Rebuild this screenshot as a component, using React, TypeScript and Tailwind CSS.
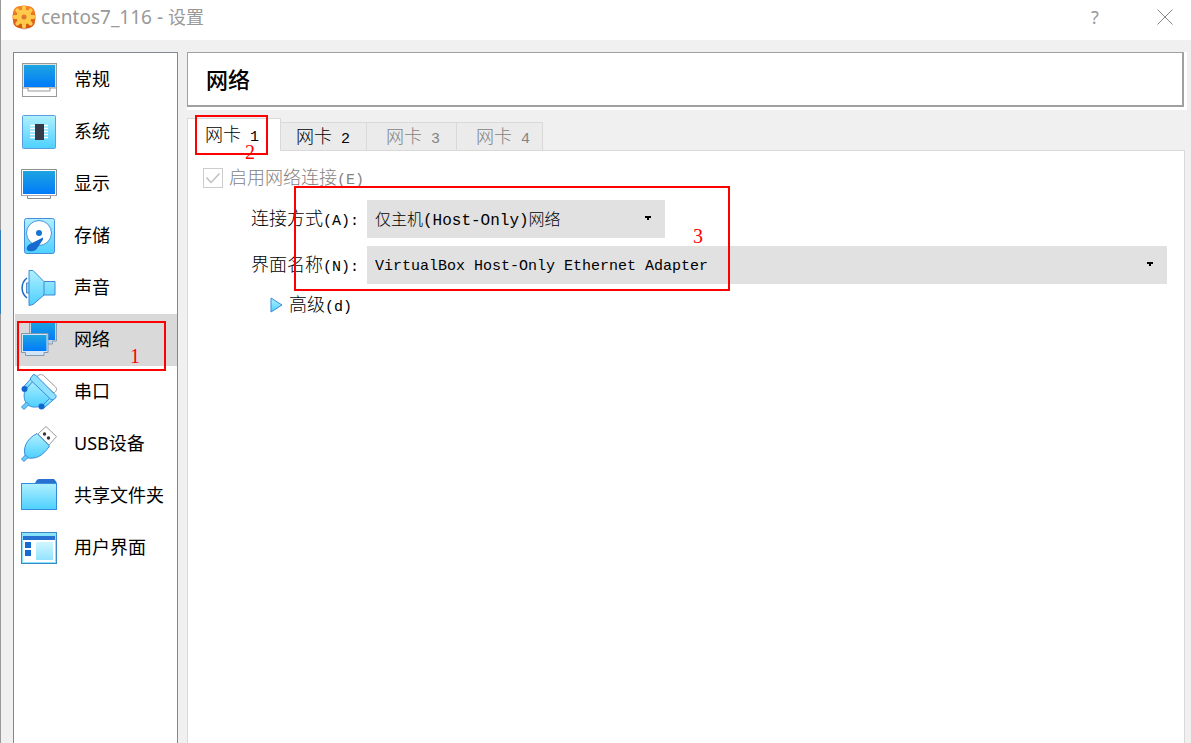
import type { ReactNode } from "react";

const sans = "font-['Noto_Sans','Noto_Sans_CJK_SC',sans-serif]";
const mono = "font-['Liberation_Mono','Noto_Sans_CJK_SC',monospace]";
const red = "text-[#ff0000] font-['Liberation_Serif','Noto_Sans_CJK_SC',serif]";

/* Sets Latin runs at half the width of the Chinese characters. */
function Mixed({ text }: { text: string }) {
  const runs = text.match(/[\x20-\x7e]+|[^\x20-\x7e]+/g) ?? [];
  return (
    <span className="inline-block pt-1 text-lg leading-5 whitespace-pre">
      {runs.map((run, i) => (
        <span key={i} className={/^[\x20-\x7e]/.test(run) ? "text-[15px] leading-5" : "font-light leading-5"}>
          {run}
        </span>
      ))}
    </span>
  );
}

function Icon({ children }: { children: ReactNode }) {
  return (
    <svg viewBox="0 0 36 36" className="size-9 shrink-0" aria-hidden="true">
      {children}
    </svg>
  );
}

function Gradients() {
  return (
    <svg className="absolute size-0" aria-hidden="true">
      <defs>
        <linearGradient id="screen" x1="0" y1="0" x2="0" y2="1">
          <stop offset="0" stopColor="#1ea4e0" />
          <stop offset="1" stopColor="#007bfa" />
        </linearGradient>
        <linearGradient id="sky" x1="0" y1="0" x2="0" y2="1">
          <stop offset="0" stopColor="#b0f0ff" />
          <stop offset="1" stopColor="#4dd0ff" />
        </linearGradient>
        <linearGradient id="gear" x1="0" y1="0" x2="0" y2="1">
          <stop offset="0" stopColor="#ffd36a" />
          <stop offset="1" stopColor="#ffc034" />
        </linearGradient>
        <linearGradient id="rim" x1="0" y1="0" x2="0" y2="1">
          <stop offset="0" stopColor="#f58a2c" />
          <stop offset="1" stopColor="#d4500e" />
        </linearGradient>
      </defs>
    </svg>
  );
}

const items: { label: string; icon: ReactNode }[] = [
  {
    label: "常规",
    icon: (
      <>
        <rect x="1.5" y="1.5" width="34" height="33" fill="#fff" stroke="#999" />
        <rect x="2" y="2" width="33" height="24" fill="#e2e2dc" />
        <rect x="3" y="3" width="31" height="22" fill="url(#screen)" />
        <path d="M2 26h33M7 26v3h22v-3" fill="none" stroke="#999" />
        <path d="M8 26h20v2H8z" fill="#fff" />
      </>
    ),
  },
  {
    label: "系统",
    icon: (
      <>
        <rect x="1.5" y="1.5" width="33" height="33" rx="1" fill="url(#sky)" stroke="#5b9fe0" />
        <path d="M9 11.5h18M9 14.5h18M9 17.5h18M9 20.5h18M9 23.5h18" stroke="#fff" strokeWidth="1.5" />
        <rect x="14" y="10" width="9" height="16" fill="#353b48" />
      </>
    ),
  },
  {
    label: "显示",
    icon: (
      <>
        <path d="M.5 3.5h35v26h-6v3h-23v-3h-6z" fill="#fff" stroke="#8d8d8d" />
        <rect x="2" y="5" width="32" height="23" fill="url(#screen)" />
        <path d="M1 29.5h34" stroke="#aaa" />
      </>
    ),
  },
  {
    label: "存储",
    icon: (
      <>
        <rect x="3.5" y=".5" width="30" height="35" rx="2" fill="url(#sky)" stroke="#448edb" />
        <circle cx="18" cy="15" r="12.5" fill="#fff" stroke="#4693e0" />
        <circle cx="18" cy="15" r="3" fill="#1674cf" />
        <path d="M22 19.5 8 26.5c-3 2.5-3 6 0 6.5 4 .5 6.500 0 8-2.5l6-9z" fill="#166bd0" />
      </>
    ),
  },
  {
    label: "声音",
    icon: (
      <>
        <path d="M9 13H5.5v10H9" fill="#7edcfa" stroke="#5585c9" />
        <path d="M8 .5h4L23 11.500h11V25H23L12 34.500l-4 1z" fill="url(#sky)" stroke="#3f88d4" strokeLinejoin="round" />
        <path d="M23 12v13" stroke="#3f88d4" />
        <path d="M6 8C-.5 13-.5 23 6 28" fill="none" stroke="#1668c7" strokeWidth="1.5" />
      </>
    ),
  },
  {
    label: "网络",
    icon: (
      <>
        <path d="M8.500 0h27v19h-4v3h-19v-3h-4z" fill="#c4d4e6" stroke="#8a9cb0" />
        <path d="M10 0h24v18H10z" fill="url(#screen)" />
        <path d="M.5 11.5h26.500v19h-4v3H4.500v-3h-4z" fill="#d4e6f5" stroke="#8298b0" />
        <path d="M2 13h23.500v16H2z" fill="url(#screen)" />
      </>
    ),
  },
  {
    label: "串口",
    icon: (
      <>
        <path d="M15 4.500c1-3.500 5-5 7.500-3L34.500 13c2 2 1 4-1.500 6z" fill="#fff" stroke="#999" />
        <path d="m2.500 13 7-8 4 4-8 8z" fill="url(#sky)" stroke="#368bdc" />
        <path d="m28 22 4 4-9 8-4-3z" fill="url(#sky)" stroke="#368bdc" />
        <path d="M3.500 17C3 22 2.500 26 6 30c4 4 9 3.500 15 2L30 23 13 6z" fill="url(#sky)" stroke="#368bdc" strokeLinejoin="round" />
        <path d="m9.500 4 3-3.500 2 .500L35 21.500v2l-3 2.500-2-.5L9.500 6z" fill="#8ee2ff" stroke="#368bdc" strokeLinejoin="round" />
        <path d="m.5 33 5-5 2.500 2.500-5 5z" fill="#69cdf5" stroke="#368bdc" />
        <circle cx="3.500" cy="15" r="3" fill="#1266d0" />
        <circle cx="20.500" cy="32.500" r="3" fill="#1266d0" />
      </>
    ),
  },
  {
    label: "USB设备",
    icon: (
      <>
        <path d="m17 8 8-7.500 10.500 10L28 19z" fill="#fff" stroke="#999" />
        <circle cx="23.500" cy="8" r="1.700" fill="#353535" />
        <circle cx="27.500" cy="12" r="1.700" fill="#353535" />
        <path d="M16 7.500 28.500 20C22 30 14 34 5 31.500 1 23 5 13 16 7.500z" fill="url(#sky)" stroke="#368bdc" />
        <path d="m.5 33 4-4 2.500 2.500-4 4z" fill="#69cdf5" stroke="#368bdc" />
      </>
    ),
  },
  {
    label: "共享文件夹",
    icon: (
      <>
        <path d="M13 6c2-1 2-5 5-5h15l2.500 3v6H13z" fill="#2871d1" />
        <rect x=".5" y="5.500" width="35" height="26" fill="url(#sky)" stroke="#358cda" />
      </>
    ),
  },
  {
    label: "用户界面",
    icon: (
      <>
        <rect x=".5" y="2.500" width="35" height="31" fill="#86e3fb" stroke="#3c89c4" />
        <rect x="2" y="10" width="32" height="22" fill="#fff" />
        <rect x="2" y="6" width="32" height="4" fill="#2871d1" />
        <path d="M4 12h6v6H4zM4 20h6v6H4z" fill="#166bd0" />
        <rect x="15" y="12" width="17" height="18" fill="url(#sky)" opacity=".6" />
      </>
    ),
  },
];

const tabs = [
  { label: "网卡 2", disabled: false, width: "w-[86px] pl-[15px]" },
  { label: "网卡 3", disabled: true, width: "w-[90px] pl-[19px]" },
  { label: "网卡 4", disabled: true, width: "w-[86px] pl-[19px]" },
];

function Combo({ id, value, className }: { id: string; value: string; className: string }) {
  return (
    <div className={`relative ${className}`}>
      <select id={id} className="h-[38px] w-full appearance-none bg-[#e1e1e1] pt-1 pr-8 pl-2 text-black outline-none">
        <option>{value}</option>
      </select>
      <svg viewBox="0 0 6 4" className="pointer-events-none absolute top-4 right-3.5 h-1 w-1.5" aria-hidden="true">
        <path d="M0 0h6v2H4v2H2V2H0z" />
      </svg>
    </div>
  );
}

export default function App() {
  return (
    <div className={`flex min-h-screen bg-[#f0f0f0] text-black ${sans}`}>
      <Gradients />
      <div className="flex w-px shrink-0 flex-col bg-[#999]">
        <div className="mt-[230px] h-[84px] bg-[#3279b5]" />
      </div>
      <div className="flex min-w-0 grow flex-col">
        <header className="flex h-10 items-center bg-white pb-1.5 pl-2.5 text-[#999]">
          <svg viewBox="0 0 26 26" className="size-[26px]" aria-hidden="true">
            <circle cx="13.500" cy="14.500" r="11" fill="#999" opacity=".45" />
            <rect x="2" y="2" width="22" height="22" rx="7" fill="url(#rim)" />
            <circle cx="13" cy="13" r="11.500" fill="url(#rim)" />
            <circle cx="13" cy="13" r="7.500" fill="url(#gear)" />
            <g stroke="url(#gear)">
              <path d="M13 3.500v19.001M3.500 13h19.001M6.300 6.300l13.400 13.401M19.700 6.300 6.300 19.700" stroke="#ffc94c" strokeWidth="4" strokeLinecap="round" />
            </g>
            <circle cx="13" cy="13" r="2.500" fill="#e8742a" />
            <circle cx="13" cy="13" r="1" fill="#b98045" />
          </svg>
          <h1 className="ml-1 grow text-lg leading-6">
            <span className="text-[19px] leading-6">centos7_116 - </span>设置
          </h1>
          <button className="mr-[54px] w-4 text-lg leading-6" aria-label="帮助">?</button>
          <button className="mr-[18px]" aria-label="关闭">
            <svg viewBox="0 0 16 16" className="size-4" aria-hidden="true">
              <path d="m.5.5 15 15m0-15-15 15" fill="none" stroke="#888" />
            </svg>
          </button>
        </header>

        <div className="flex grow pt-3 pl-3">
          <nav className="w-[165px] shrink-0 border border-b-0 border-[#828790] bg-white px-px pt-px pr-0">
            {items.map((item, i) => (
              <div key={item.label} className="relative">
                <button
                  className={`flex h-[52px] w-full items-center gap-[17px] pl-1.5 text-lg whitespace-nowrap ${i === 5 ? "bg-[#d9d9d9]" : ""}`}
                >
                  <Icon>{item.icon}</Icon>
                  <span className="pb-0.5">{item.label}</span>
                </button>
                {i === 5 && (
                  <div className={`pointer-events-none absolute top-[7px] left-0.5 z-10 h-[50px] w-[149px] border-2 border-[#ff0000] pt-[23px] pl-[111px] text-xl leading-5 ${red}`}>
                    1
                  </div>
                )}
              </div>
            ))}
          </nav>

          <main className={`ml-[9px] flex min-w-0 grow flex-col pr-1 ${mono}`}>
            <div className="border-r-3 border-b-3 border-white">
              <h2 className={`flex h-[55px] items-center border border-r-2 border-b-2 border-[#a0a0a0] bg-white pl-[18px] text-[22px] leading-6 font-medium ${sans}`}>
                网络
              </h2>
            </div>

            <div className="mt-2 mr-0.5 flex grow flex-col">
              <div className="z-10 -mb-px flex items-end" role="tablist">
                <div className="relative">
                  <button role="tab" aria-selected="true" className="flex h-[33px] w-[94px] items-center border border-b-0 border-[#d9d9d9] bg-white pl-[17px]">
                    <Mixed text="网卡 1" />
                  </button>
                  <div className={`pointer-events-none absolute -top-[3px] left-2 h-10 w-[73px] border-2 border-[#ff0000] pt-[25px] pl-12 text-xl leading-5 ${red}`}>
                    2
                  </div>
                </div>
                {tabs.map((tab) => (
                  <button
                    key={tab.label}
                    role="tab"
                    disabled={tab.disabled}
                    className={`mb-px flex h-7 items-center border-t border-r border-[#d9d9d9] bg-[#ebebeb] ${tab.width} ${tab.disabled ? "text-[#838383]" : ""}`}
                  >
                    <Mixed text={tab.label} />
                  </button>
                ))}
              </div>

              <section className="grow border border-b-0 border-[#d9d9d9] bg-white pt-[17px] pr-[17px] pb-4 pl-[15px]">
                <label className="flex h-5 items-center text-[#838383]">
                  <input type="checkbox" checked disabled readOnly className="peer sr-only" />
                  <svg viewBox="0 0 20 20" className="mr-1.5 size-5" aria-hidden="true">
                    <rect x=".5" y=".5" width="19" height="19" fill="#fff" stroke="#ccc" />
                    <path d="m3.500 9.500 4.500 5 8.500-9" fill="none" stroke="#bfbfbf" strokeWidth="1.500" />
                  </svg>
                  <Mixed text="启用网络连接(E)" />
                </label>

                <div className="relative mt-3 grid grid-cols-[156px_1fr] items-center gap-2">
                  <label htmlFor="mode" className="flex justify-end"><Mixed text="连接方式(A):" /></label>
                  <Combo id="mode" value="仅主机(Host-Only)网络" className="w-[298px] text-base font-light" />
                  <label htmlFor="adapter" className="flex justify-end"><Mixed text="界面名称(N):" /></label>
                  <Combo id="adapter" value="VirtualBox Host-Only Ethernet Adapter" className="w-full text-[15px]" />
                  <div className={`pointer-events-none absolute -top-3.5 left-[91px] h-[105px] w-[436px] border-2 border-[#ff0000] pt-[38px] pl-[397px] text-xl leading-5 ${red}`}>
                    3
                  </div>
                </div>

                <button className="mt-[11px] ml-[67px] flex h-5 items-center">
                  <svg viewBox="0 0 13 16" className="mr-1.5 h-4 w-[13px]" aria-hidden="true">
                    <path d="M1 1v14l11-7z" fill="url(#sky)" stroke="#368bdc" strokeLinejoin="round" />
                  </svg>
                  <Mixed text="高级(d)" />
                </button>
              </section>
            </div>
          </main>
        </div>
      </div>
    </div>
  );
}
